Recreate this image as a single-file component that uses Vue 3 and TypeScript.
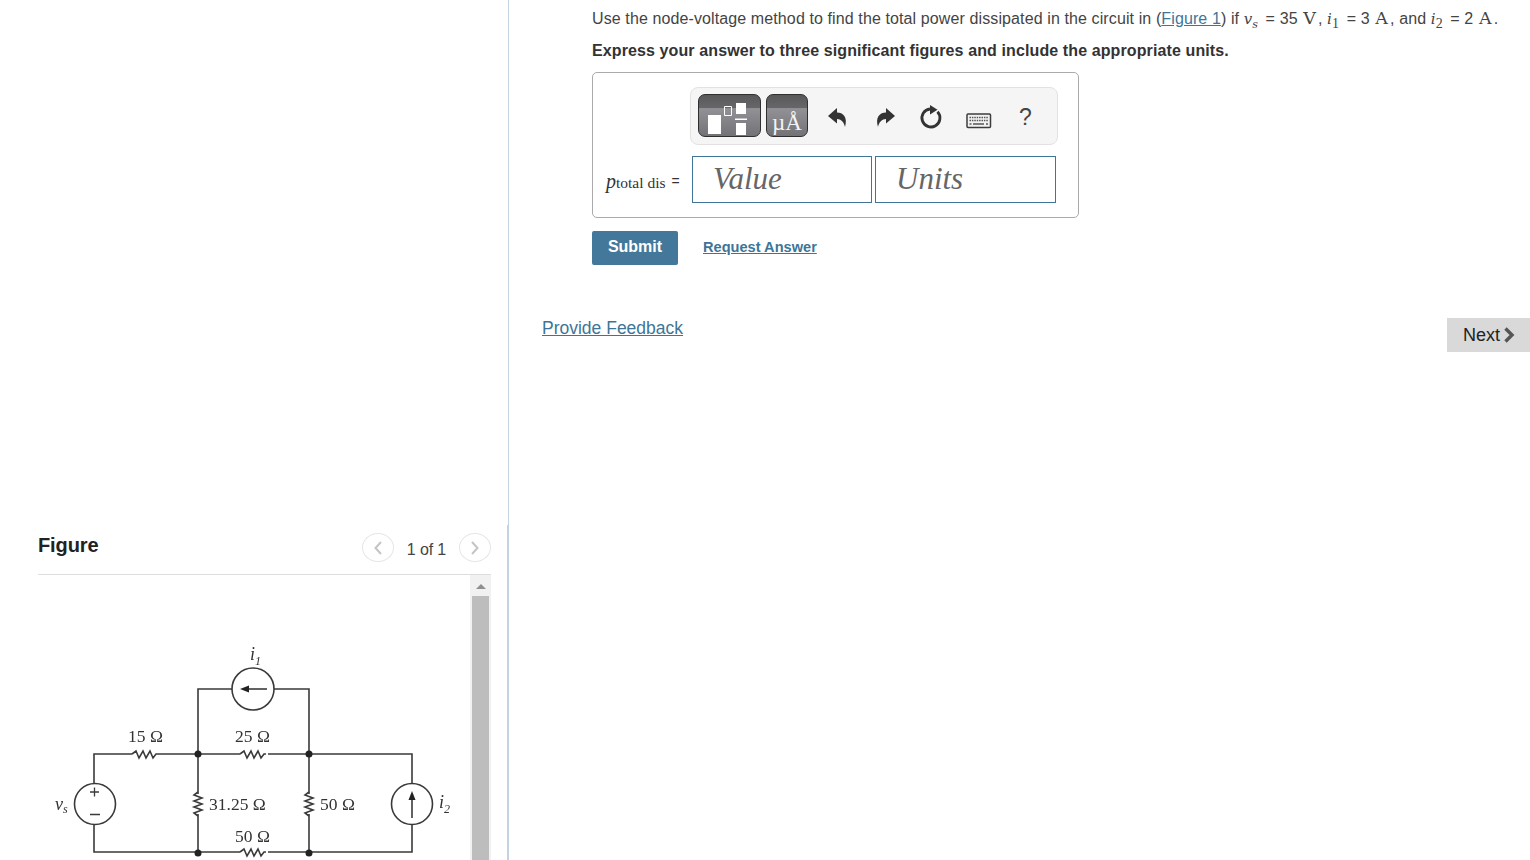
<script setup lang="ts">
const wires = [
  'M198 754V689H232',
  'M274 689H309V754',
  'M132 754H94V783',
  'M94 824V852H240',
  'M268 852H412V824',
  'M160 754H240',
  'M268 754H412V783',
  'M198 754V794',
  'M198 814V852',
  'M309 754V794',
  'M309 814V852',
]
const dots = [
  [198, 754],
  [309, 754],
  [198, 853],
  [309, 853],
]
const labels = [
  { x: 128, y: 742, text: '15 Ω' },
  { x: 235, y: 742, text: '25 Ω' },
  { x: 209, y: 810, text: '31.25 Ω' },
  { x: 320, y: 810, text: '50 Ω' },
  { x: 235, y: 842, text: '50 Ω' },
]
</script>

<template>
  <div class="page">
    <aside class="left-pane">
      <section class="figure">
        <header class="figure-head">
          <h2>Figure</h2>
          <div class="pager">
            <span class="round">
              <svg width="10" height="14" viewBox="0 0 10 14"><path d="M8 1 2.500 7 8 13" /></svg>
            </span>
            <span class="count">1 of 1</span>
            <span class="round">
              <svg width="10" height="14" viewBox="0 0 10 14"><path d="M2 1 7.500 7 2 13" /></svg>
            </span>
          </div>
        </header>
        <div class="figure-body">
          <div class="canvas">
            <svg class="circuit" width="432" height="285" viewBox="38 575 432 285">
              <g fill="none" stroke="#3a3a3a" stroke-width="1.600">
                <path v-for="w in wires" :key="w" :d="w" />
                <circle cx="253" cy="689" r="21" />
                <circle cx="95" cy="804" r="20.500" />
                <circle cx="412" cy="804" r="20.500" />
                <path d="M132 754l4-3 3 7 4-7 3 7 4-7 3 7 3-4h4" />
                <path d="M240 754l4-3 3 7 4-7 3 7 4-7 3 7 3-4h2" />
                <path d="M240 852l4-3 3 7 4-7 3 7 4-7 3 7 3-4h2" />
                <path d="M198 792l-4 3 8 3-8 3 8 3-8 3 8 3-8 3 4 3" />
                <path d="M309 792l-4 3 8 3-8 3 8 3-8 3 8 3-8 3 4 3" />
                <path d="M267 689H246" />
                <path d="M412 818V796" />
              </g>
              <path d="M240 689l9-3.500v7z" fill="#222" />
              <path d="M412 791l-3.500 9h7z" fill="#222" />
              <path d="M90 792h9M94.500 787.500v9M90 814.500h10" fill="none" stroke="#3a3a3a" stroke-width="1.300" />
              <circle v-for="d in dots" :key="d[0] + '-' + d[1]" :cx="d[0]" :cy="d[1]" r="3.500" fill="#222" />
              <text v-for="l in labels" :key="l.text + l.x" :x="l.x" :y="l.y" class="val">{{ l.text }}</text>
              <text x="250" y="660" class="sym">i<tspan class="sub" dy="5">1</tspan></text>
              <text x="55" y="810" class="sym">v<tspan class="sub" dy="3">s</tspan></text>
              <text x="439" y="808" class="sym">i<tspan class="sub" dy="5">2</tspan></text>
            </svg>
          </div>
          <div class="scrollbar">
            <span class="arrow-up"></span>
            <span class="thumb"></span>
          </div>
        </div>
      </section>
    </aside>

    <main class="right-pane">
      <div class="part">
        <p class="question">
          Use the node-voltage method to find the total power dissipated in the circuit in
          (<a href="#">Figure 1</a>) if <i class="m">v<sub>s</sub></i> = 35 <span class="u">V</span>,
          <i class="m">i<sub class="n">1</sub></i> = 3 <span class="u">A</span>, and
          <i class="m">i<sub class="n">2</sub></i> = 2 <span class="u">A</span>.
        </p>
        <p class="instruction">Express your answer to three significant figures and include the appropriate units.</p>

        <div class="answer-box">
          <div class="toolbar">
            <div class="tool tool-wide">
              <svg width="61" height="41" viewBox="0 0 61 41">
                <path d="M25.500 11.500h7v9h-7z" fill="none" stroke="#fff" stroke-width="1" />
                <path d="M9 20h13v19H9zM37 8h10v11H37zM36 23.500h12v1.500H36zM37 28h10v12H37z" fill="#fff" />
              </svg>
            </div>
            <div class="tool tool-unit"><span>µÅ</span></div>
            <div class="actions">
              <span class="action">
                <svg width="22" height="24" viewBox="0 0 22 24"><path d="M1 11 10 3v4.500c6 0 11 4.500 8 14.500-1-5-4-8-8-8v4.500z" fill="#333" /></svg>
              </span>
              <span class="action">
                <svg width="22" height="24" viewBox="0 0 22 24"><path d="M21 11 12 3v4.500c-6 0-11 4.500-8 14.500 1-5 4-8 8-8v4.500z" fill="#333" /></svg>
              </span>
              <span class="action">
                <svg width="26" height="28" viewBox="0 0 26 28">
                  <path d="M18.500 8.800A9 9 0 1 1 11 6" fill="none" stroke="#333" stroke-width="2.800" />
                  <path d="M11 2v9.500l7.500-4.700z" fill="#333" />
                </svg>
              </span>
              <span class="action">
                <svg class="kbd" width="26" height="18" viewBox="0 0 26 18">
                  <rect x="1" y="2" width="23.500" height="13.500" rx="1" fill="#f2f2f2" stroke="#3c3c3c" stroke-width="1.500" />
                  <path d="M3.500 5.500h18.500M3.500 8.500h18.500" stroke="#555" stroke-width="1.500" stroke-dasharray="1.500 .9" fill="none" />
                  <path d="M3.500 12h2M7 12h11M20 12h2" stroke="#555" stroke-width="1.500" fill="none" />
                </svg>
              </span>
              <span class="action help">?</span>
            </div>
          </div>
          <div class="answer-row">
            <label class="answer-label"><i>p</i><span class="lbl-sub">total dis</span> <span class="eq">=</span></label>
            <div class="field field-value">Value</div>
            <div class="field field-units">Units</div>
          </div>
        </div>

        <div class="submit-row">
          <button class="submit" type="button">Submit</button>
          <a class="request" href="#">Request Answer</a>
        </div>
      </div>

      <div class="feedback-row">
        <a class="feedback" href="#">Provide Feedback</a>
        <button class="next" type="button">
          Next
          <svg width="12" height="16" viewBox="0 0 12 16"><path d="M2.500 1.500 9 8l-6.500 6.500" fill="none" stroke="#555" stroke-width="3.400" /></svg>
        </button>
      </div>
    </main>
  </div>
</template>

<style>
html,
body {
  margin: 0;
  background: #fff;
}
</style>

<style scoped>
.page {
  display: flex;
  width: 1530px;
  height: 860px;
  overflow: hidden;
  font-family: "Liberation Sans", Arial, sans-serif;
  color: #333;
  background: #fff;
}

.left-pane {
  width: 508px;
  flex: none;
  display: flex;
  flex-direction: column;
  justify-content: flex-end;
}

.figure {
  height: 335px;
  box-sizing: border-box;
  padding-left: 38px;
  padding-right: 16px;
  border-right: 1px solid #c3d3e2;
}

.figure-head {
  height: 49px;
  display: flex;
  justify-content: space-between;
  align-items: flex-start;
  border-bottom: 1px solid #ddd;
}

.figure-head h2 {
  margin: 9px 0 0;
  font-size: 20px;
  line-height: 23px;
  font-weight: 700;
  letter-spacing: -0.1px;
  color: #222;
}

.pager {
  display: flex;
  align-items: center;
  margin-top: 8px;
  gap: 13px;
}

.round {
  width: 32px;
  height: 29px;
  box-sizing: border-box;
  border: 1px solid #e6e6e6;
  border-radius: 50%;
  display: flex;
  align-items: center;
  justify-content: center;
}

.round path {
  fill: none;
  stroke: #c4c4c4;
  stroke-width: 2;
}

.count {
  margin-top: 5px;
  font-size: 16px;
  letter-spacing: -0.15px;
  color: #444;
}

.figure-body {
  display: flex;
  height: 285px;
}

.canvas {
  width: 432px;
  flex: none;
}

.circuit {
  display: block;
  filter: blur(0.35px);
}

.val {
  font-family: "Liberation Serif", serif;
  font-size: 17.500px;
  fill: #333;
}

.sym {
  font-family: "Liberation Serif", serif;
  font-style: italic;
  font-size: 18px;
  fill: #333;
}

.sub {
  font-size: 12px;
}

.scrollbar {
  width: 21px;
  flex: none;
  background: #f1f1f1;
  display: flex;
  flex-direction: column;
  align-items: center;
}

.arrow-up {
  margin-top: 9px;
  width: 0;
  height: 0;
  border-left: 5px solid transparent;
  border-right: 5px solid transparent;
  border-bottom: 5px solid #8f8f8f;
}

.thumb {
  margin-top: 7px;
  width: 17px;
  flex: 1;
  background: #bdbdbd;
}

.right-pane {
  flex: 1;
  border-left: 1px solid #c3d3e2;
  box-sizing: border-box;
  min-width: 0;
}

.part {
  padding: 0 0 0 83px;
}

.question {
  margin: 8px 0 0;
  font-size: 16px;
  line-height: 21px;
  letter-spacing: 0.11px;
  white-space: nowrap;
  color: #444;
}

.question a,
.feedback {
  color: #3e7597;
}

.m {
  font-family: "DejaVu Serif", serif;
  font-size: 15px;
  margin-right: 3px;
}

.m sub {
  font-size: 11px;
  line-height: 0;
}

.m sub.n {
  font-style: normal;
  font-family: "Liberation Serif", serif;
  font-size: 14px;
}

.u {
  font-family: "DejaVu Serif", serif;
  font-size: 17.500px;
  line-height: 0;
  margin: 0 2px 0 1px;
}

.instruction {
  margin: 10px 0 0;
  font-size: 16px;
  line-height: 21px;
  letter-spacing: 0.11px;
  font-weight: 700;
  white-space: nowrap;
}

.answer-box {
  margin-top: 11px;
  width: 487px;
  height: 146px;
  box-sizing: border-box;
  border: 1px solid #aaa;
  border-radius: 5px;
  padding: 14px 0 0 97px;
}

.toolbar {
  width: 368px;
  height: 58px;
  box-sizing: border-box;
  border: 1px solid #e2e2e2;
  border-radius: 8px;
  background: #f5f5f5;
  padding: 6px 7px;
  display: flex;
  gap: 5px;
}

.tool {
  height: 43px;
  box-sizing: border-box;
  border: 1px solid #2f2f2f;
  border-radius: 7px;
  background: linear-gradient(#58585a 0, #67676a 32%, #929296 33%, #737377 100%);
  overflow: hidden;
}

.tool svg {
  display: block;
}

.tool-wide {
  width: 63px;
}

.tool-unit {
  width: 42px;
  display: flex;
  justify-content: center;
  align-items: flex-end;
  color: #f4f4f4;
  font-family: "Liberation Serif", serif;
  font-size: 23px;
  line-height: 26px;
}

.actions {
  display: flex;
  align-items: center;
  height: 46px;
  margin-left: 1px;
}

.action {
  width: 47px;
  display: flex;
  justify-content: center;
}

.kbd {
  margin-top: 8px;
}

.help {
  font-size: 23px;
  color: #444;
}

.answer-row {
  position: relative;
  margin: 11px 0 0 2px;
  display: flex;
  gap: 3px;
}

.answer-label {
  position: absolute;
  left: -86px;
  top: 14px;
  font-family: "Liberation Serif", serif;
  font-size: 15.500px;
  white-space: nowrap;
}

.answer-label i {
  font-size: 20px;
}

.eq {
  font-family: "Liberation Sans", sans-serif;
  font-size: 14px;
  margin-left: 2px;
  vertical-align: 2px;
}

.field {
  height: 47px;
  box-sizing: border-box;
  border: 1px solid #3f7698;
  padding-left: 20px;
  font-family: "Liberation Serif", serif;
  font-style: italic;
  font-size: 31px;
  line-height: 44px;
  color: #666;
}

.field-value {
  width: 180px;
}

.field-units {
  width: 181px;
}

.submit-row {
  margin-top: 13px;
  display: flex;
  align-items: center;
  gap: 25px;
}

.submit {
  width: 86px;
  height: 34px;
  border: 0;
  border-radius: 2px;
  background: #43789b;
  color: #fff;
  font-family: inherit;
  font-size: 16px;
  font-weight: 700;
  padding: 0 0 2px;
}

.request {
  margin-bottom: 2px;
  font-size: 14.600px;
  font-weight: 700;
  color: #3e7597;
}

.feedback-row {
  margin-top: 53px;
  padding-left: 33px;
  display: flex;
  justify-content: space-between;
  align-items: flex-start;
}

.feedback {
  font-size: 17.500px;
  line-height: 21px;
}

.next {
  width: 83px;
  height: 34px;
  border: 0;
  background: #d9d9d9;
  color: #222;
  font-family: inherit;
  font-size: 18px;
  padding: 0 0 0 1px;
  display: flex;
  align-items: center;
  justify-content: center;
  gap: 3px;
}
</style>
